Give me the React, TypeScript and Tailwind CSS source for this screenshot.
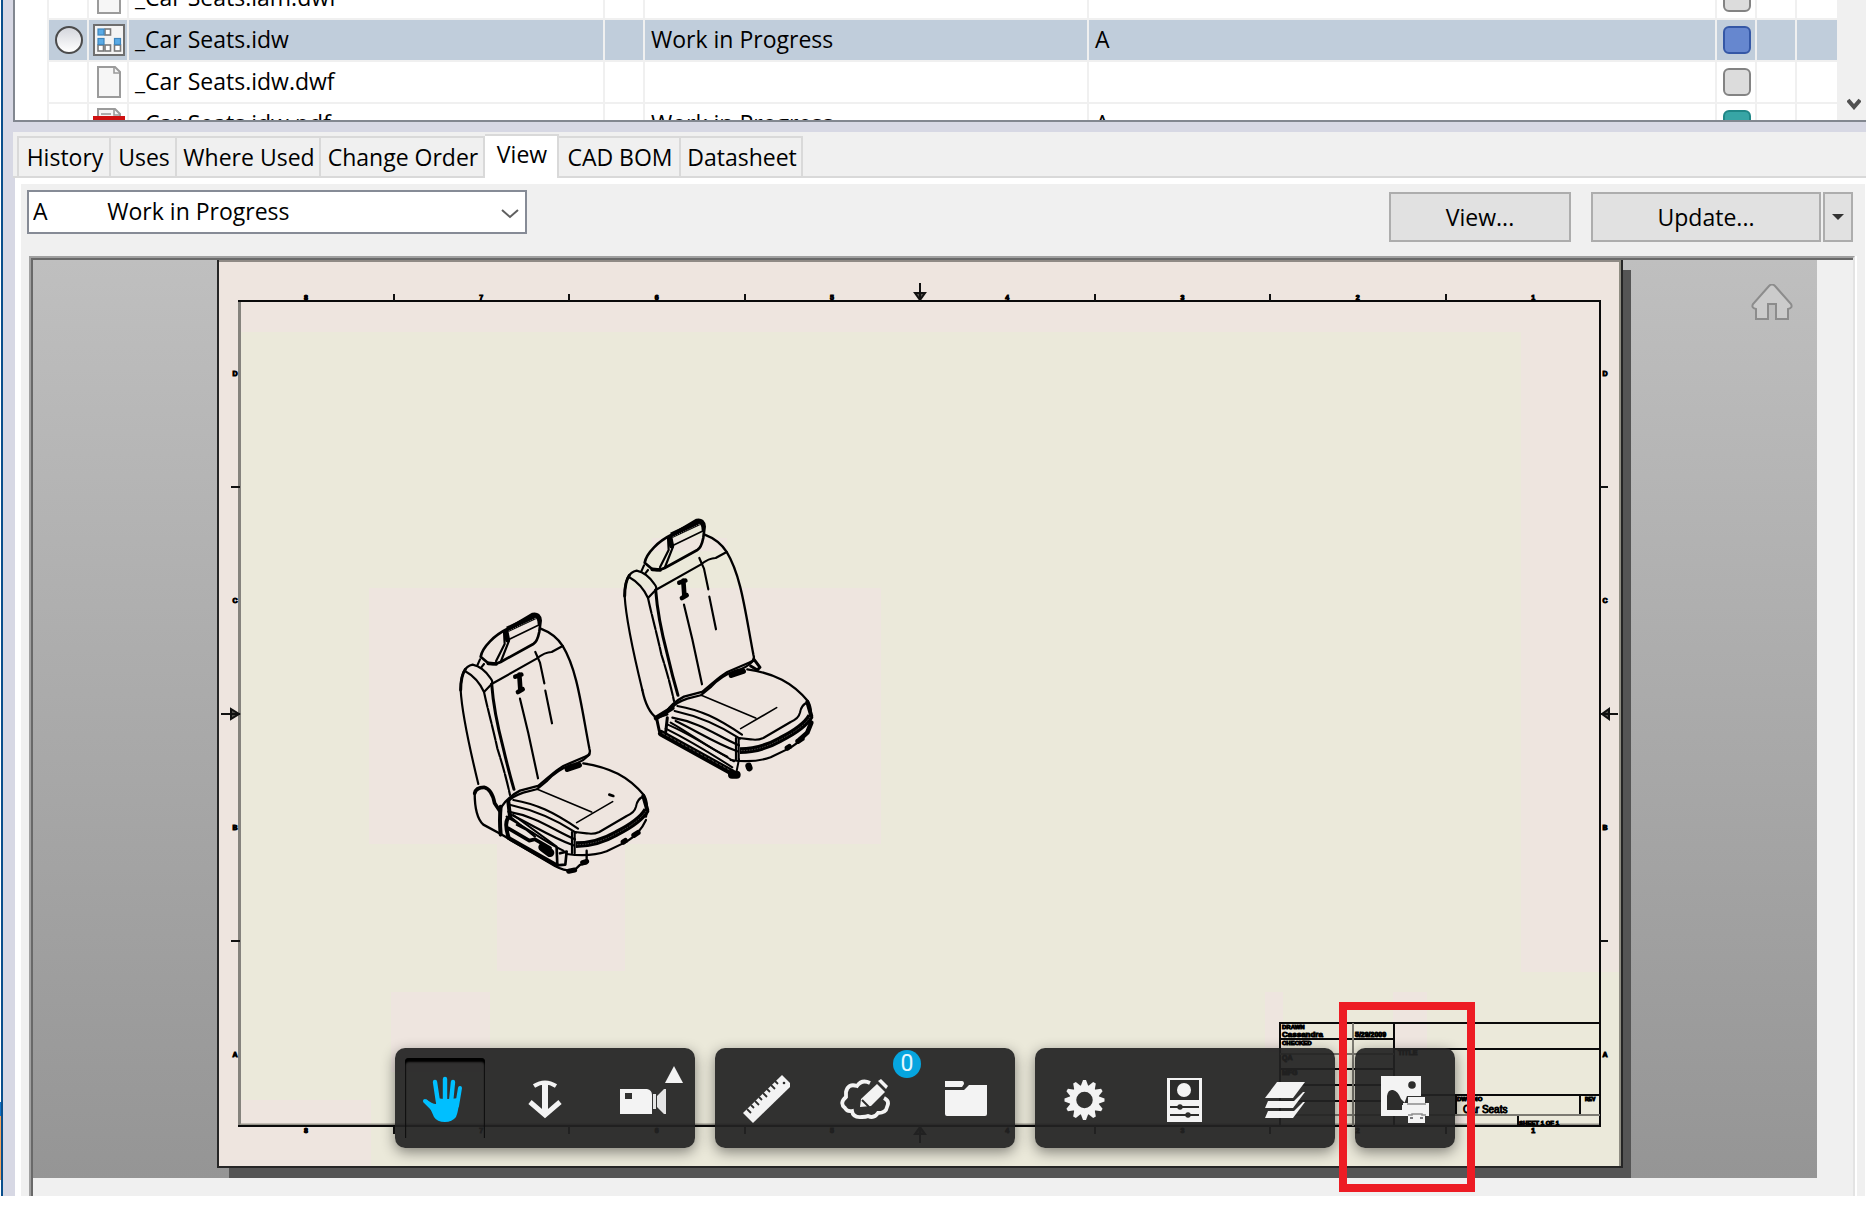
import React from 'react';

type FileKind = 'page' | 'drawing' | 'pdf';

const files: { name: string; kind: FileKind; state: string; rev: string; status: string; selected?: boolean }[] = [
  { name: '_Car Seats.iam.dwf', kind: 'page', state: '', rev: '', status: 'bg-[#dcdcdc] border-[#838383]' },
  { name: '_Car Seats.idw', kind: 'drawing', state: 'Work in Progress', rev: 'A', status: 'bg-[#6687cf] border-[#3457a6]', selected: true },
  { name: '_Car Seats.idw.dwf', kind: 'page', state: '', rev: '', status: 'bg-[#dcdcdc] border-[#838383]' },
  { name: '_Car Seats.idw.pdf', kind: 'pdf', state: 'Work in Progress', rev: 'A', status: 'bg-[#37a5a5] border-[#208787]' },
];

const tabs = [
  { label: 'History', width: 'w-[92px]' },
  { label: 'Uses', width: 'w-[66px]' },
  { label: 'Where Used', width: 'w-[144px]' },
  { label: 'Change Order', width: 'w-[164px]' },
  { label: 'View', width: 'w-[74px]', active: true },
  { label: 'CAD BOM', width: 'w-[122px]' },
  { label: 'Datasheet', width: 'w-[122px]' },
];

const FileIcon = ({ kind }: { kind: FileKind }) => {
  if (kind === 'drawing') {
    return (
      <svg className="block w-8 h-8" viewBox="0 0 32 32" aria-hidden="true">
        <rect x="1" y="1" width="30" height="30" fill="#f4f4f4" stroke="#6e6e6e" strokeWidth="2" />
        <g fill="#fff" stroke="#7a7a7a" strokeWidth="1.6">
          <rect x="12" y="5" width="5.5" height="6" />
          <rect x="5" y="21" width="5.5" height="6" />
          <rect x="12" y="21" width="5.5" height="6" />
          <rect x="21.5" y="21" width="6" height="6" />
        </g>
        <g fill="#5aabe6" stroke="#3f86bd" strokeWidth="1.2">
          <rect x="5" y="5" width="6" height="6" />
          <rect x="5" y="14.5" width="6" height="6" />
          <rect x="21.5" y="14.5" width="6" height="6" />
        </g>
      </svg>
    );
  }
  return (
    <svg className="block w-8 h-8" viewBox="0 0 32 32" aria-hidden="true">
      <path d="M5 1 H22 L27 6 V31 H5 Z" fill="#f6f6f6" stroke="#9b9b9b" strokeWidth="2" />
      <path d="M21 1 V7 H27" fill="none" stroke="#9b9b9b" strokeWidth="1.6" />
      {kind === 'pdf' && (
        <>
          <path d="M8 6 H18" stroke="#9b9b9b" strokeWidth="1.6" />
          <rect x="0" y="8" width="32" height="14" fill="#cf1111" />
        </>
      )}
    </svg>
  );
};

// One seat; the base underneath differs between driver and passenger side
const SeatBody = () => (
  <g fill="none" stroke="#000" strokeWidth="6.5" strokeLinejoin="round" strokeLinecap="round">
    <path d="M122 470 C128 440 165 405 200 388 L278 342 Q300 338 302 362 L298 395 Q292 425 280 432 L182 486 Q165 495 145 490 Z" strokeWidth="8" />
    <path d="M202 388 L284 350" strokeWidth="17" strokeLinecap="butt" />
    <path d="M206 393 L286 355" stroke="#8a8782" strokeWidth="3" strokeDasharray="3 4" strokeLinecap="butt" />
    <path d="M280 346 Q298 348 298 372" strokeWidth="10" />
    <path d="M200 392 L206 425 L182 486 M192 396 L194 432 L168 484" />
    <path d="M198 395 L203 420" strokeWidth="15" />
    <path d="M208 418 L298 374" strokeWidth="5" />
    <path d="M145 490 L168 492" strokeWidth="11" />
    <path d="M120 478 L112 496 M132 492 L124 502" />
    <path d="M115 852 C95 770 66 640 62 570 Q62 500 98 494 Q128 500 152 535 Q160 545 155 552" />
    <path d="M62 570 Q62 528 76 508" strokeWidth="9" />
    <path d="M76 514 C98 526 118 546 132 576 L155 552" />
    <path d="M132 576 C146 640 158 680 172 745 Q196 820 210 885" strokeDasharray="46 5" />
    <path d="M155 552 C160 620 178 700 190 745 Q205 810 222 868" strokeWidth="9" />
    <path d="M155 552 L290 476 Q315 456 335 456 L368 438" />
    <path d="M302 386 Q345 402 368 438 C412 510 424 620 448 745 Q454 762 440 768" strokeWidth="7" />
    <path d="M440 768 L370 798 C345 812 318 840 294 858 L240 872 Q205 890 185 920" strokeWidth="7" />
    <path d="M448 764 Q425 788 395 794 Q350 810 322 842 L290 868 L250 878 Q215 890 205 905" />
    <path d="M382 808 L418 796" strokeWidth="16" />
    <path d="M286 456 L300 488 L313 550 M316 572 L336 670 M240 596 L265 700 L294 835" />
    <path d="M226 530 L244 524 M238 524 L241 568 M234 576 L248 568" strokeWidth="14" />
    <path d="M430 790 C510 802 566 830 612 886 Q626 910 618 950" strokeWidth="7" />
    <path d="M292 868 L455 936 M410 968 L518 905" strokeWidth="5" />
    <path d="M610 890 Q592 896 588 920 Q584 938 560 948 L478 996 Q460 1004 440 1000 L405 996" />
    <path d="M610 888 L622 930" strokeWidth="12" />
    <path d="M220 900 C290 912 340 936 414 986 M212 915 C290 932 350 960 408 998 M205 935 C290 950 340 990 405 1018 M215 945 C280 976 330 1010 400 1036 M200 950 C270 990 320 1030 370 1052" />
    <path d="M404 996 V1060 M396 996 V1060" />
    <path d="M408 1034 Q470 1034 530 1000 Q600 965 620 930" strokeWidth="20" strokeLinecap="butt" />
    <path d="M412 1034 Q470 1034 530 1000 Q600 965 620 930" stroke="#77736e" strokeWidth="2" strokeDasharray="2 6" />
    <path d="M380 1062 Q450 1072 500 1054 L560 1025 Q600 1000 618 960" />
    <path d="M550 1026 L556 1022 M582 1006 L594 998" strokeWidth="16" />
  </g>
);

const DriverBase = () => (
  <g fill="none" stroke="#000" strokeWidth="6" strokeLinejoin="round" strokeLinecap="round">
    <path d="M104 880 Q108 862 132 862 Q156 868 164 910 L180 934" strokeWidth="11" />
    <path d="M104 878 Q104 950 130 974 L182 1002" strokeWidth="7" />
    <path d="M182 920 Q178 960 182 1004 M205 905 L210 950 Q190 960 205 1010" strokeWidth="12" />
    <path d="M182 1002 L345 1098 Q375 1114 402 1112 L420 1095 L440 1090 V1052" strokeWidth="7" />
    <path d="M206 1014 L350 1096" strokeWidth="12" />
    <path d="M205 985 L268 1022 L285 1018 L330 1044" strokeWidth="11" />
    <path d="M308 1042 L330 1058" strokeWidth="26" />
    <path d="M210 950 L285 1010 M220 945 L350 1040 M230 975 L280 1000" />
    <path d="M350 1045 L352 1095 M360 1060 L380 1055 L376 1094 L350 1096" strokeWidth="8" />
    <path d="M386 1114 L404 1110 M428 1088 L440 1084" strokeWidth="15" />
    <path d="M508 884 L520 888" strokeWidth="8" />
  </g>
);

const PassengerBase = () => (
  <g fill="none" stroke="#000" strokeWidth="6" strokeLinejoin="round" strokeLinecap="round">
    <path d="M115 852 Q128 915 158 936 L190 925" strokeWidth="7" />
    <path d="M156 936 L205 906" strokeWidth="14" />
    <path d="M158 938 L166 975 M190 935 L185 980" strokeWidth="9" />
    <path d="M172 982 L385 1100" strokeWidth="20" />
    <path d="M176 982 L380 1094" stroke="#77736e" strokeWidth="2" strokeDasharray="6 7" />
    <path d="M190 955 C260 985 310 1020 390 1066 M185 968 C250 1000 310 1036 385 1084 M405 1060 L398 1095" />
    <path d="M384 1106 L398 1106" strokeWidth="24" />
    <path d="M434 1080 L436 1086" strokeWidth="20" />
    <path d="M588 1000 L610 980 L622 950" strokeWidth="14" />
    <path d="M450 760 L468 784 L460 792 L440 780" strokeWidth="9" />
  </g>
);

const columnLabels = ['8', '7', '6', '5', '4', '3', '2', '1'];
const rowLabels = ['D', 'C', 'B', 'A'];
const columnTicks = [394, 569, 745, 1095, 1270, 1446];
const rowTicks = [487, 941];

const Sheet = () => (
  <svg className="block shrink-0 w-[1416px]" viewBox="217 260 1416 918" role="img" aria-label="Car Seats drawing sheet">
    <rect x="229" y="270" width="1402" height="908" fill="#555" />
    <rect x="217" y="250" width="1405" height="918" fill="#ebe9da" />

    {/* tinted tiles */}
    <g fill="#eee5df">
      <path d="M219 260 H1620 V972 H1521 V332 H240 V1100 H371 V1167 H219 Z" />
      <rect x="369" y="588" width="512" height="256" />
      <rect x="497" y="844" width="128" height="127" />
      <rect x="391" y="992" width="99" height="80" />
      <rect x="652" y="538" width="75" height="13" />
      <rect x="1265" y="992" width="18" height="60" />
      <rect x="1393" y="992" width="34" height="57" />
      <rect x="1456" y="1116" width="18" height="9" />
    </g>

    {/* sheet edge */}
    <path d="M219 261 H1620" stroke="#8f8a85" strokeWidth="2" />
    <path d="M1620 260 V1167" stroke="#8f8d82" strokeWidth="2" />
    <path d="M218 260 V1167 H1622 V260" fill="none" stroke="#262626" strokeWidth="2" />

    {/* border frame */}
    <path d="M239.5 301 V1126" stroke="#85837d" strokeWidth="3" />
    <path d="M240 1124.5 H1600" stroke="#96948a" strokeWidth="2" />
    <path d="M238 301 H1600 V1126 H238" fill="none" stroke="#0a0a0a" strokeWidth="2" />
    <g stroke="#111" strokeWidth="2">
      {columnTicks.map((x) => (
        <path key={x} d={`M${x} 294 V301 M${x} 1126 V1134`} />
      ))}
      {rowTicks.map((y) => (
        <path key={y} d={`M231 ${y} H240 M1600 ${y} H1608`} />
      ))}
    </g>
    <g fill="#55534e" stroke="#111" strokeWidth="2">
      <path d="M920 283 V301 M915 293 H925 L920 300 Z" />
      <path d="M920 1126 V1143 M915 1134 H925 L920 1127 Z" />
      <path d="M221 714 H240 M231 709 V719 L239 714 Z" />
      <path d="M1618 714 H1601 M1609 709 V719 L1602 714 Z" />
    </g>
    <g fontFamily="Liberation Sans, sans-serif" fontWeight="700" fontSize="7" textAnchor="middle" fill="#000" stroke="#000" strokeWidth="1">
      {columnLabels.map((label, i) => (
        <React.Fragment key={label}>
          <text x={306 + i * 175.3} y="300">{label}</text>
          <text x={306 + i * 175.3} y="1133">{label}</text>
        </React.Fragment>
      ))}
      {rowLabels.map((label, i) => (
        <React.Fragment key={label}>
          <text x="235" y={376 + i * 227}>{label}</text>
          <text x="1605" y={376 + i * 227}>{label}</text>
        </React.Fragment>
      ))}
    </g>

    {/* title block */}
    <g fill="none" stroke="#0a0a0a" strokeWidth="2">
      <path d="M1280 1126 V1023 H1600 M1394 1023 V1126 M1280 1039 H1394 M1280 1069 H1394 M1280 1085 H1394 M1280 1101 H1394" />
      <path d="M1394 1049 H1600 M1394 1095 H1600 M1456 1095 V1115 M1580 1095 V1115 M1518 1115 V1126" />
      <path d="M1353 1023 V1126 M1280 1054 H1394 M1280 1115 H1600" stroke="#7c7a72" />
    </g>
    <g fontFamily="Liberation Sans, sans-serif" fontWeight="700" fontSize="7" fill="#000" stroke="#000" strokeWidth="1">
      <text x="1282" y="1029" fontSize="6">DRAWN</text>
      <text x="1282" y="1037" fontSize="8">Cassandra</text>
      <text x="1282" y="1045" fontSize="6">CHECKED</text>
      <text x="1355" y="1037">5/29/2009</text>
      <text x="1282" y="1060">QA</text>
      <text x="1282" y="1075">MFG</text>
      <text x="1398" y="1055">TITLE</text>
      <text x="1457" y="1101" fontSize="6">DWG NO</text>
      <text x="1585" y="1101" fontSize="5">REV</text>
      <text x="1519" y="1125" fontSize="6">SHEET 1 OF 1</text>
    </g>
    <text x="1463" y="1113" fontFamily="Liberation Sans, sans-serif" fontSize="10" fill="#000" stroke="#000" strokeWidth="0.9">Car Seats</text>

    {/* seats */}
    <g transform="translate(440 500) scale(0.3333)">
      <SeatBody />
      <DriverBase />
    </g>
    <g transform="translate(604 406) scale(0.3333)">
      <SeatBody />
      <PassengerBase />
    </g>
  </svg>
);

const PanIcon = () => (
  <svg className="block w-[50px] h-[50px]" viewBox="2 -1 50 50" aria-hidden="true">
    <g fill="none" stroke="#00bfff" strokeLinecap="round">
      <path d="M7 27 L17 37" strokeWidth="4" />
      <path d="M17 8 L20 28" strokeWidth="4.4" />
      <path d="M27 5 V28" strokeWidth="4.4" />
      <path d="M35 8 L33 28" strokeWidth="4.4" />
      <path d="M42 14 L39 32" strokeWidth="4" />
    </g>
    <path d="M8 25 Q14 30 18 30 L19 24 Q27 26 41 24 Q41 36 38 43 Q34 48 27 48 Q19 48 16 43 Z" fill="#00bfff" />
  </svg>
);

const ZoomIcon = () => (
  <svg className="block w-[50px] h-[50px]" viewBox="0 -1 50 50" aria-hidden="true">
    <path d="M14 12 Q25 5 36 12" fill="none" stroke="#f3f3f3" strokeWidth="4" />
    <path d="M25 8 V40" fill="none" stroke="#f3f3f3" strokeWidth="6" />
    <path d="M10 28 L25 41 L40 28" fill="none" stroke="#f3f3f3" strokeWidth="5" />
  </svg>
);

const CameraIcon = () => (
  <svg className="block w-[50px] h-[50px]" viewBox="2 -1 50 50" aria-hidden="true">
    <path d="M2 15 H29 Q34 16 34 21 V40 H2 Z M7 19 V25 H14 V19 Z" fill="#f3f3f3" fillRule="evenodd" />
    <path d="M35 20 H38 V35 H35 Z M39 22 L46 15 H48 V40 H46 L39 33 Z" fill="#e4e4e4" />
  </svg>
);

const MeasureIcon = () => (
  <svg className="block w-[50px] h-[50px]" viewBox="-2 -1 50 50" aria-hidden="true">
    <path d="M40 1 L50 11 L11 49 L1 39 Z" fill="#f3f3f3" />
    <path d="M5 35 L9 39 M9 31 L12 34 M13 27 L17 31 M17 23 L20 26 M21 19 L25 23 M25 15 L28 18 M29 11 L33 15 M33 7 L36 10" stroke="#2c2c2b" strokeWidth="1.8" />
    <circle cx="42" cy="9" r="1.3" fill="#2c2c2b" />
  </svg>
);

const MarkupIcon = () => (
  <svg className="block w-[50px] h-[50px]" viewBox="0 -2 50 50" aria-hidden="true">
    <path
      d="M30 8 Q22 4 17 11 Q8 8 6 17 Q6 20 6 22 Q-1 28 5 33 Q7 37 12 36 Q13 43 22 42 Q26 42 28 41 Q34 44 38 38 Q46 38 47 32 Q50 26 44 23"
      fill="none"
      stroke="#f3f3f3"
      strokeWidth="3.8"
    />
    <path d="M37 9 L45 17 L31 31 L20 32 L21 24 Z" fill="#f3f3f3" />
    <path d="M38 6 L41 4 L48 11 L46 14 Z" fill="#f3f3f3" />
    <path d="M22 25 L29 32" stroke="#2c2c2b" strokeWidth="2" />
  </svg>
);

const FolderIcon = () => (
  <svg className="block w-[50px] h-[50px]" viewBox="-1 0 50 50" aria-hidden="true">
    <path d="M4 8 H21 Q23 8 23 11 L21 14 H4 Z" fill="#f3f3f3" />
    <path d="M4 17 H23 L28 12 H46 V41 Q46 43 44 43 H6 Q4 43 4 41 Z" fill="#f3f3f3" />
  </svg>
);

const SettingsIcon = () => (
  <svg className="block w-[50px] h-[50px]" viewBox="0 -2 50 50" aria-hidden="true">
    {[0, 30, 60, 90, 120, 150, 180, 210, 240, 270, 300, 330].map((angle) => (
      <path key={angle} d="M20 13 L23 5 H26 L29 13 Z" fill="#f3f3f3" transform={`rotate(${angle} 24.5 25)`} />
    ))}
    <circle cx="24.5" cy="25" r="11.5" fill="none" stroke="#f3f3f3" strokeWidth="6.5" />
  </svg>
);

const PropertiesIcon = () => (
  <svg className="block w-[50px] h-[50px]" viewBox="1 -2 50 50" aria-hidden="true">
    <rect x="8" y="3" width="35" height="44" fill="#f3f3f3" />
    <rect x="11" y="5" width="29" height="20" fill="#2c2c2b" />
    <circle cx="25" cy="15" r="7" fill="#f3f3f3" />
    <path d="M11 32 H40 M11 40 H40" stroke="#2c2c2b" strokeWidth="1.8" />
    <circle cx="21" cy="32" r="2.7" fill="#2c2c2b" />
    <circle cx="29" cy="40" r="2.7" fill="#2c2c2b" />
  </svg>
);

const LayersIcon = () => (
  <svg className="block w-[50px] h-[50px]" viewBox="0 -2 50 50" aria-hidden="true">
    <g fill="#f3f3f3">
      <path d="M17 7 H45 L33 23 H5 Z" />
      <path d="M8 26 H34 L43 17 H45 L33 33 H5 Z" />
      <path d="M8 36 H34 L43 27 H45 L33 43 H5 Z" />
    </g>
  </svg>
);

const PrintIcon = () => (
  <svg className="block w-[50px] h-[50px]" viewBox="1 -2 50 50" aria-hidden="true">
    <path d="M2 1 H42 V21 H28 L24 32 V41 H2 Z" fill="#f3f3f3" />
    <path d="M8 35 V21 Q9 14 14 15 Q19 16 22 24 L26 28 V30 H23 V35 Z" fill="#2c2c2b" />
    <circle cx="33" cy="10" r="3.8" fill="#2c2c2b" />
    <path d="M29 22 H46 V28 H50 V41 H46 V48 H29 V41 H24 V28 H29 Z" fill="#f3f3f3" />
    <path d="M28 29 H47 M29 40 H33 V39 H43 V40 H47" fill="none" stroke="#8d8d8d" strokeWidth="1.5" />
    <path d="M31 43 H34 M41 43 H44" stroke="#77777a" strokeWidth="2" />
  </svg>
);

const ToolButton = ({ label, active, children }: { label: string; active?: boolean; children: React.ReactNode }) => (
  <button
    type="button"
    aria-label={label}
    className={`relative w-20 h-20 flex items-center justify-center ${
      active ? 'rounded-t-sm shadow-[inset_0_4px_2px_#000,inset_1px_2px_1px_#141414,inset_-1px_2px_1px_#141414]' : ''
    }`}
  >
    {children}
  </button>
);

const ToolGroup = ({ children }: { children: React.ReactNode }) => (
  <div className="flex gap-5 p-[10px] rounded-[10px] bg-[#222222]/93 shadow-[0_4px_14px_rgba(0,0,0,0.45)]">{children}</div>
);

const FileList = () => (
  <div className="flex h-[122px] overflow-hidden border-l-2 border-b-2 border-[#828790] bg-white">
    <table className="flex-1 -mt-[22px] w-full table-fixed border-separate border-spacing-0">
      <colgroup>
        <col className="w-[34px]" />
        <col className="w-10" />
        <col className="w-10" />
        <col className="w-[476px]" />
        <col className="w-10" />
        <col className="w-[444px]" />
        <col />
        <col className="w-10" />
        <col className="w-10" />
        <col className="w-[42px]" />
      </colgroup>
      <tbody>
        {files.map((file) => {
          const cell = `h-[42px] p-0 border-r-2 border-b-2 border-[#f0f0f0] ${file.selected ? 'bg-[#c0cddb]' : ''}`;
          return (
            <tr key={file.name}>
              <td className="p-0 border-r-2 border-[#f0f0f0]"></td>
              <td className={`${cell} pl-[2px]`}>
                {file.selected && (
                  <input
                    type="radio"
                    aria-label={`Select ${file.name}`}
                    className="block appearance-none mx-auto w-7 h-7 rounded-full border-2 border-[#4b4b4b] bg-gradient-to-b from-[#d5d7dd] to-white"
                  />
                )}
              </td>
              <td className={`${cell} pl-1`}>
                <FileIcon kind={file.kind} />
              </td>
              <td className={`${cell} pl-[6px] pb-[2px]`}>{file.name}</td>
              <td className={cell}></td>
              <td className={`${cell} pl-[6px] pb-[2px]`}>{file.state}</td>
              <td className={`${cell} pl-[6px] pb-[2px]`}>{file.rev}</td>
              <td className={`${cell} pl-[2px]`}>
                <div className={`mx-auto w-7 h-7 rounded-md border-2 ${file.status}`} />
              </td>
              <td className={cell}></td>
              <td className={cell}></td>
            </tr>
          );
        })}
      </tbody>
    </table>
    <div className="flex items-end justify-center w-[27px] pb-[10px] pl-[2px] bg-[#f0f0f0]">
      <button type="button" aria-label="Scroll down">
        <svg className="block w-[14px] h-3" viewBox="0 0 14 12" aria-hidden="true">
          <path d="M1 2 L7 9 L13 2" fill="none" stroke="#505050" strokeWidth="4" />
        </svg>
      </button>
    </div>
  </div>
);

const App = () => {
  return (
    <div className="flex h-[1196px] bg-white text-black font-['Open_Sans','Noto_Sans',sans-serif] text-[23px] leading-[30px]">
      {/* window edge */}
      <div className="flex flex-col justify-end w-[3px] shrink-0 border-r-2 border-[#0a4f8c] bg-white pb-4">
        <div className="h-[14px] bg-[#1273c8]" />
        <div className="h-16 bg-[#f2a45f]" />
      </div>
      <div className="w-[10px] shrink-0 bg-[#d7d8e4]" />

      <div className="flex flex-col flex-1 min-w-0 bg-[#d7d8e4]">
        <FileList />

        <div role="tablist" className="flex items-end h-[46px] mt-[10px] pl-1 shrink-0 bg-[#f0f0f0] shadow-[inset_0_-2px_0_#d9d9d9]">
          <div className="w-[2px] h-[42px] bg-[#d9d9d9]" />
          {tabs.map((tab) => (
            <button
              key={tab.label}
              type="button"
              role="tab"
              aria-selected={!!tab.active}
              className={`${tab.width} whitespace-nowrap border-t-2 border-r-2 border-[#d9d9d9] text-center pl-[2px] ${
                tab.active ? 'h-11 pb-[6px] bg-white' : 'h-[42px] pb-[2px]'
              }`}
            >
              {tab.label}
            </button>
          ))}
        </div>

        <div className="flex flex-1 min-h-0 ml-[2px] pt-[6px] pl-[6px] pr-[1px] bg-white">
          <div className="flex flex-col flex-1 min-w-0 bg-[#f0f0f0]">
            <div className="flex items-start justify-between pt-[6px] pl-[6px] pr-3 h-[72px] shrink-0">
              <div className="relative">
                <label htmlFor="version" className="sr-only">
                  Version
                </label>
                <select
                  id="version"
                  className="appearance-none w-[500px] h-11 pl-1 pb-[2px] border-2 border-[#868b96] bg-white rounded-none"
                >
                  <option>{'A' + '\u00a0'.repeat(10) + 'Work in Progress'}</option>
                </select>
                <svg className="absolute right-2 top-[18px] w-[18px] h-3 pointer-events-none" viewBox="0 0 18 12" aria-hidden="true">
                  <path d="M1 2 L9 9 L17 2" fill="none" stroke="#5f5f5f" strokeWidth="2" />
                </svg>
              </div>

              <div className="flex pt-[2px]">
                <button type="button" className="w-[182px] h-[50px] mr-5 border-2 border-[#adadad] bg-[#e1e1e1]">
                  View...
                </button>
                <button type="button" className="w-[230px] h-[50px] mr-[2px] border-2 border-[#adadad] bg-[#e1e1e1]">
                  Update...
                </button>
                <button
                  type="button"
                  aria-label="Update options"
                  className="flex items-center justify-center w-[30px] h-[50px] border-2 border-[#adadad] bg-[#e1e1e1]"
                >
                  <svg className="block w-3 h-[6px]" viewBox="0 0 12 6" aria-hidden="true">
                    <path d="M0 0 H12 L6 6 Z" fill="#333" />
                  </svg>
                </button>
              </div>
            </div>

            <div className="flex-1 ml-2 mr-2 border-r-2 border-white">
              <div className="h-full border-t-2 border-l-2 border-r-2 border-t-[#a0a0a0] border-l-[#a0a0a0] border-r-[#e3e3e3]">
                <div className="h-full pr-9 border-t-2 border-l-2 border-[#696969]">
                  <div className="relative flex justify-center h-[918px] bg-gradient-to-b from-[#bfbfbf] to-[#959595]">
                    <Sheet />

                    <button type="button" aria-label="Home" className="absolute top-6 right-6">
                      <svg className="block w-[42px] h-9" viewBox="0 0 42 36" aria-hidden="true">
                        <path
                          d="M18 2 Q21 -1 24 2 L40 20 Q42 24 37 25 V35 H25 V20 H17 V35 H5 V25 Q0 24 2 20 Z"
                          fill="#cbcbcb"
                          stroke="#8c8c8c"
                          strokeWidth="2"
                        />
                      </svg>
                    </button>

                    <div className="absolute inset-x-0 bottom-[30px] flex justify-center gap-5">
                      <ToolGroup>
                        <ToolButton label="Pan" active>
                          <PanIcon />
                        </ToolButton>
                        <ToolButton label="Zoom">
                          <ZoomIcon />
                        </ToolButton>
                        <ToolButton label="Camera">
                          <CameraIcon />
                          <svg className="absolute top-2 right-[2px] w-[18px] h-[17px]" viewBox="0 0 18 17" aria-hidden="true">
                            <path d="M9 0 L18 17 H0 Z" fill="#f3f3f3" />
                          </svg>
                        </ToolButton>
                      </ToolGroup>
                      <ToolGroup>
                        <ToolButton label="Measure">
                          <MeasureIcon />
                        </ToolButton>
                        <ToolButton label="Markup">
                          <MarkupIcon />
                          <span className="absolute -top-2 -right-4 flex items-center justify-center w-7 h-7 rounded-full bg-[#06a5df] text-[#e6f7fd] text-[23px] leading-7 font-['Roboto',sans-serif]">
                            0
                          </span>
                        </ToolButton>
                        <ToolButton label="Documents">
                          <FolderIcon />
                        </ToolButton>
                      </ToolGroup>
                      <ToolGroup>
                        <ToolButton label="Settings">
                          <SettingsIcon />
                        </ToolButton>
                        <ToolButton label="Properties">
                          <PropertiesIcon />
                        </ToolButton>
                        <ToolButton label="Layers">
                          <LayersIcon />
                        </ToolButton>
                      </ToolGroup>
                      <div className="relative">
                        <ToolGroup>
                          <ToolButton label="Print">
                            <PrintIcon />
                          </ToolButton>
                        </ToolGroup>
                        {/* callout around the print tool */}
                        <div className="absolute -top-[46px] -bottom-11 -left-4 -right-5 border-8 border-[#ed1c24] pointer-events-none" />
                      </div>
                    </div>
                  </div>
                </div>
              </div>
            </div>
          </div>
        </div>
      </div>
    </div>
  );
};

export default App;
